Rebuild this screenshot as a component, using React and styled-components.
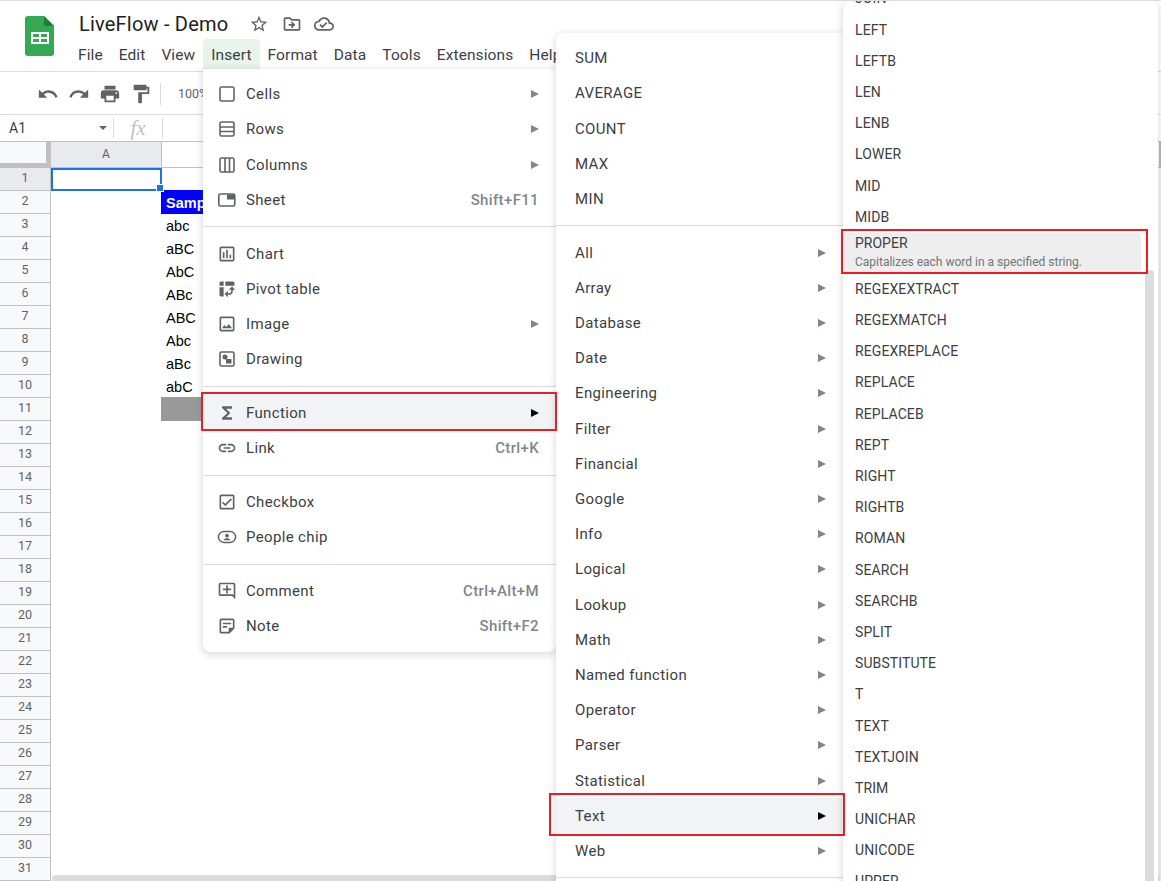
import styled, { createGlobalStyle } from "styled-components";
import {
  MdUndo,
  MdRedo,
  MdPrint,
  MdFormatPaint,
  MdStarBorder,
  MdOutlineDriveFileMove,
  MdOutlineCloudDone,
  MdOutlineAssessment,
  MdPivotTableChart,
  MdOutlineImage,
  MdFunctions,
  MdLink,
  MdOutlineCheckBox,
  MdOutlineAddComment,
  MdOutlineStickyNote2,
} from "react-icons/md";

const GlobalStyle = createGlobalStyle`
  html, body {
    margin: 0;
    padding: 0;
    background: #fff;
  }
  body {
    font-family: Roboto, "Liberation Sans", sans-serif;
    color: #3c4043;
  }
`;

const Page = styled.div`
  position: relative;
  width: 1161px;
  height: 881px;
  overflow: hidden;
  border-top: 1px solid #dadce0;
  box-sizing: border-box;
`;

const Header = styled.header`
  display: flex;
  height: 71px;
  box-sizing: border-box;
  padding-left: 25px;
  border-bottom: 1px solid #dadce0;
`;

const LogoSlot = styled.div`
  width: 45px;
  padding-top: 15px;
`;

const TitleBlock = styled.div`
  display: flex;
  flex-direction: column;
`;

const TitleRow = styled.div`
  display: flex;
  align-items: center;
  height: 38px;
  box-sizing: border-box;
  padding: 8px 0 0 9px;
`;

const Title = styled.div`
  width: 170px;
  font-size: 20px;
  letter-spacing: 0.2px;
  color: #202124;
`;

const TitleIcon = styled.span`
  display: flex;
  width: 32.5px;
  font-size: 20px;
  color: #5f6368;
`;

const MenuBar = styled.nav`
  display: flex;
`;

const MenuBarItem = styled.div`
  height: 30px;
  padding: 0 8px;
  font-size: 15.5px;
  letter-spacing: 0.1px;
  line-height: 32px;
  border-radius: 4px 4px 0 0;
  white-space: nowrap;
  background: ${(p) => (p.$open ? "#e6f4ea" : "transparent")};
`;

const Toolbar = styled.div`
  display: flex;
  align-items: center;
  height: 43px;
  box-sizing: border-box;
  padding: 1px 0 0 32px;
  border-bottom: 1px solid #dadce0;
`;

const ToolIcon = styled.span`
  display: flex;
  justify-content: center;
  width: 31px;
  font-size: 22px;
  color: #5f6368;
`;

const ToolDivider = styled.span`
  width: 1px;
  height: 22px;
  margin: 0 17px 0 4px;
  background: #dadce0;
`;

const ZoomValue = styled.span`
  font-size: 12.5px;
  color: #5f6368;
`;

const FormulaBar = styled.div`
  display: flex;
  align-items: center;
  height: 27px;
  box-sizing: border-box;
  border-bottom: 1px solid #c0c0c0;
`;

const NameBox = styled.div`
  display: flex;
  align-items: center;
  justify-content: space-between;
  width: 113px;
  box-sizing: border-box;
  padding: 0 6px 0 9px;
  font-size: 14px;
  color: #3c4043;
`;

const Caret = styled.span`
  width: 0;
  height: 0;
  border-left: 4px solid transparent;
  border-right: 4px solid transparent;
  border-top: 4px solid #5f6368;
`;

const FormulaDivider = styled.span`
  width: 1px;
  height: 20px;
  background: #dadce0;
`;

const Fx = styled.span`
  width: 48px;
  text-align: center;
  font-family: "Liberation Serif", serif;
  font-style: italic;
  font-size: 21px;
  line-height: 22px;
  color: #bdc1c6;
`;

const HeaderRow = styled.div`
  display: flex;
  height: 26px;
  box-sizing: border-box;
  border-bottom: 1px solid #c0c0c0;
`;

const Corner = styled.div`
  width: 46px;
  height: 21px;
  background: #f8f9fa;
`;

const CornerWrap = styled.div`
  width: 51px;
  height: 25px;
  background: #c0c0c0;
`;

const ColumnHead = styled.div`
  width: 111px;
  box-sizing: border-box;
  border-right: 1px solid #c0c0c0;
  background: #e8eaed;
  text-align: center;
  font-size: 12px;
  line-height: 25px;
  color: #5f6368;
`;

const Row = styled.div`
  display: flex;
  height: 23px;
`;

const RowNumber = styled.div`
  width: 51px;
  box-sizing: border-box;
  border-right: 1px solid #c0c0c0;
  border-bottom: 1px solid #c0c0c0;
  background: ${(p) => (p.$active ? "#e8eaed" : "#f8f9fa")};
  text-align: center;
  font-size: 12.5px;
  line-height: 20px;
  color: #5f6368;
`;

const Cell = styled.div`
  position: relative;
  box-sizing: border-box;
  width: ${(p) => (p.$selected ? "111px" : "110px")};
  margin-right: ${(p) => (p.$selected ? "-1px" : "0")};
  border: ${(p) => (p.$selected ? "2px solid #1a73e8" : "none")};
  height: ${(p) => (p.$selected ? "23px" : "auto")};
`;

const FillHandle = styled.span`
  position: absolute;
  right: -4px;
  bottom: -3px;
  width: 6px;
  height: 6px;
  background: #1a73e8;
  border: 1px solid #fff;
  z-index: 1;
`;

const SampleCell = styled.div`
  width: 110px;
  height: ${(p) => (p.$kind === "body" ? "23px" : "24px")};
  margin-top: ${(p) => (p.$kind === "body" ? "0" : "-1px")};
  box-sizing: border-box;
  padding-left: 5px;
  font-family: "Liberation Sans", Arial, sans-serif;
  font-size: 14.5px;
  line-height: ${(p) => (p.$kind === "head" ? "26px" : "24px")};
  color: ${(p) => (p.$kind === "head" ? "#fff" : "#000")};
  font-weight: ${(p) => (p.$kind === "head" ? 700 : 400)};
  background: ${(p) =>
    p.$kind === "head" ? "#0000ff" : p.$kind === "foot" ? "#999" : "transparent"};
`;

const HorizontalScroll = styled.div`
  position: absolute;
  left: 52px;
  right: 0;
  bottom: 0;
  height: 6px;
  border-radius: 4px 0 0 0;
  background: #dadce0;
`;

const VerticalTrack = styled.div`
  position: absolute;
  right: 0;
  top: 140px;
  bottom: 0;
  width: 2px;
  background: #eee;
`;

const VerticalThumb = styled.div`
  height: 27px;
  background: #b8b8b8;
`;

const Menu = styled.div`
  position: absolute;
  top: ${(p) => p.$top}px;
  left: ${(p) => p.$left}px;
  width: ${(p) => p.$width}px;
  height: ${(p) => p.$height}px;
  box-sizing: border-box;
  padding-top: ${(p) => p.$pad}px;
  background: #fff;
  overflow: hidden;
  border-radius: ${(p) => p.$radius};
  box-shadow: 0 2px 6px 2px rgba(60, 64, 67, 0.15);
`;

const MenuRow = styled.div`
  display: flex;
  align-items: center;
  height: 35.2px;
  padding: 0 17px 0 ${(p) => p.$indent}px;
  font-size: 15px;
  letter-spacing: 0.35px;
  color: #3c4043;
  background: ${(p) => (p.$active ? "#f1f3f4" : "transparent")};
`;

const MenuIcon = styled.span`
  display: flex;
  justify-content: center;
  width: 20px;
  margin-right: 9px;
  font-size: 20px;
  color: #5f6368;
`;

const MenuLabel = styled.span`
  flex: 1;
`;

const Shortcut = styled.span`
  font-weight: 500;
  color: #80868b;
`;

const Arrow = styled.span`
  width: 0;
  height: 0;
  border-top: 4px solid transparent;
  border-bottom: 4px solid transparent;
  border-left: 8px solid ${(p) => (p.$active ? "#000" : "#80868b")};
`;

const Separator = styled.div`
  height: 1px;
  margin: 8.8px 0;
  background: #dadce0;
`;

const FunctionList = styled.div`
  margin-top: -17.6px;
  width: 298px;
`;

const FunctionRow = styled.div`
  height: 31.2px;
  padding-left: 12px;
  font-size: 14px;
  letter-spacing: 0.1px;
  line-height: 31px;
  color: #3c4043;
`;

const ProperRow = styled.div`
  height: 41px;
  box-sizing: border-box;
  padding: 1px 0 0 12px;
  background: #eee;
`;

const ProperName = styled.div`
  font-size: 14px;
  line-height: 19px;
`;

const ProperHint = styled.div`
  font-size: 12px;
  line-height: 19px;
  color: #70757a;
`;

const MenuScroll = styled.div`
  position: absolute;
  top: 269px;
  right: 4px;
  bottom: 0;
  width: 9px;
  border-radius: 3px 3px 0 0;
  background: #dadce0;
`;

const Callout = styled.div`
  position: absolute;
  top: ${(p) => p.$top}px;
  left: ${(p) => p.$left}px;
  width: ${(p) => p.$width}px;
  height: ${(p) => p.$height}px;
  box-sizing: border-box;
  border: 2px solid #ed1c24;
`;

const SheetsLogo = () => (
  <svg width="29" height="40" viewBox="0 0 29 40">
    <path
      d="M3 0H19L29 10V37a3 3 0 0 1-3 3H3a3 3 0 0 1-3-3V3a3 3 0 0 1 3-3z"
      fill="#34a853"
    />
    <path d="M19 0L29 10H21a2 2 0 0 1-2-2z" fill="#188038" />
    <path
      d="M6 16H24V28H6zM8 18V21H14V18zM16 18V21H22V18zM8 23V26H14V23zM16 23V26H22V23z"
      fill="#fff"
      fillRule="evenodd"
    />
  </svg>
);

const Glyph = ({ children }) => (
  <svg width="20" height="20" viewBox="0 0 20 20" fill="none" stroke="currentColor" strokeWidth="1.6">
    {children}
  </svg>
);

const CellsIcon = () => (
  <Glyph>
    <rect x="3" y="3" width="14" height="14" rx="1.5" />
  </Glyph>
);

const RowsIcon = () => (
  <Glyph>
    <rect x="3" y="3" width="14" height="14" rx="1.5" />
    <path d="M3 8h14M3 12.500h14" />
  </Glyph>
);

const ColumnsIcon = () => (
  <Glyph>
    <rect x="3" y="3" width="14" height="14" rx="1.5" />
    <path d="M8 3v14M12.500 3v14" />
  </Glyph>
);

const SheetIcon = () => (
  <Glyph>
    <rect x="1.800" y="4" width="16" height="12" rx="1.500" />
    <path d="M10 4.500h7.300v5H10z" fill="currentColor" stroke="none" />
  </Glyph>
);

const DrawingIcon = () => (
  <Glyph>
    <rect x="3" y="3" width="14" height="14" rx="1.500" />
    <circle cx="8" cy="8" r="2.500" fill="currentColor" stroke="none" />
    <rect x="9" y="10" width="5.500" height="4.500" fill="currentColor" stroke="none" />
  </Glyph>
);

const PeopleIcon = () => (
  <svg width="22" height="20" viewBox="0 0 22 20" fill="none" stroke="currentColor" strokeWidth="1.6">
    <rect x="1.500" y="4" width="19" height="12" rx="6" />
    <circle cx="11" cy="8.500" r="2" fill="currentColor" stroke="none" />
    <path d="M7.500 13.500c0-1.500 2-2 3.500-2s3.500.5 3.500 2z" fill="currentColor" stroke="none" />
  </svg>
);

const insertMenu = [
  [
    { icon: <CellsIcon />, label: "Cells", sub: true },
    { icon: <RowsIcon />, label: "Rows", sub: true },
    { icon: <ColumnsIcon />, label: "Columns", sub: true },
    { icon: <SheetIcon />, label: "Sheet", keys: "Shift+F11" },
  ],
  [
    { icon: <MdOutlineAssessment />, label: "Chart" },
    { icon: <MdPivotTableChart />, label: "Pivot table" },
    { icon: <MdOutlineImage />, label: "Image", sub: true },
    { icon: <DrawingIcon />, label: "Drawing" },
  ],
  [
    { icon: <MdFunctions />, label: "Function", sub: true, active: true },
    { icon: <MdLink />, label: "Link", keys: "Ctrl+K" },
  ],
  [
    { icon: <MdOutlineCheckBox />, label: "Checkbox" },
    { icon: <PeopleIcon />, label: "People chip" },
  ],
  [
    { icon: <MdOutlineAddComment />, label: "Comment", keys: "Ctrl+Alt+M" },
    { icon: <MdOutlineStickyNote2 />, label: "Note", keys: "Shift+F2" },
  ],
];

const quickFunctions = ["SUM", "AVERAGE", "COUNT", "MAX", "MIN"];

const categories = [
  "All",
  "Array",
  "Database",
  "Date",
  "Engineering",
  "Filter",
  "Financial",
  "Google",
  "Info",
  "Logical",
  "Lookup",
  "Math",
  "Named function",
  "Operator",
  "Parser",
  "Statistical",
  "Text",
  "Web",
];

const textBefore = ["JOIN", "LEFT", "LEFTB", "LEN", "LENB", "LOWER", "MID", "MIDB"];

const textAfter = [
  "REGEXEXTRACT",
  "REGEXMATCH",
  "REGEXREPLACE",
  "REPLACE",
  "REPLACEB",
  "REPT",
  "RIGHT",
  "RIGHTB",
  "ROMAN",
  "SEARCH",
  "SEARCHB",
  "SPLIT",
  "SUBSTITUTE",
  "T",
  "TEXT",
  "TEXTJOIN",
  "TRIM",
  "UNICHAR",
  "UNICODE",
  "UPPER",
];

const menuNames = ["File", "Edit", "View", "Insert", "Format", "Data", "Tools", "Extensions", "Help"];

const samples = ["abc", "aBC", "AbC", "ABc", "ABC", "Abc", "aBc", "abC"];

const sampleFor = (n) => {
  if (n === 2) return { kind: "head", text: "Sample" };
  if (n >= 3 && n <= 10) return { kind: "body", text: samples[n - 3] };
  if (n === 11) return { kind: "foot", text: "" };
  return null;
};

const App = () => {
  const rows = Array.from({ length: 31 }, (_, i) => i + 1);

  return (
    <Page>
      <GlobalStyle />
      <Header>
        <LogoSlot>
          <SheetsLogo />
        </LogoSlot>
        <TitleBlock>
          <TitleRow>
            <Title>LiveFlow - Demo</Title>
            <TitleIcon>
              <MdStarBorder />
            </TitleIcon>
            <TitleIcon>
              <MdOutlineDriveFileMove />
            </TitleIcon>
            <TitleIcon>
              <MdOutlineCloudDone />
            </TitleIcon>
          </TitleRow>
          <MenuBar>
            {menuNames.map((name) => (
              <MenuBarItem key={name} $open={name === "Insert"}>
                {name}
              </MenuBarItem>
            ))}
          </MenuBar>
        </TitleBlock>
      </Header>

      <Toolbar>
        <ToolIcon>
          <MdUndo />
        </ToolIcon>
        <ToolIcon>
          <MdRedo />
        </ToolIcon>
        <ToolIcon>
          <MdPrint />
        </ToolIcon>
        <ToolIcon>
          <MdFormatPaint />
        </ToolIcon>
        <ToolDivider />
        <ZoomValue>100%</ZoomValue>
      </Toolbar>

      <FormulaBar>
        <NameBox>
          A1
          <Caret />
        </NameBox>
        <FormulaDivider />
        <Fx>fx</Fx>
        <FormulaDivider />
      </FormulaBar>

      <HeaderRow>
        <CornerWrap>
          <Corner />
        </CornerWrap>
        <ColumnHead>A</ColumnHead>
      </HeaderRow>

      {rows.map((n) => {
        const sample = sampleFor(n);
        return (
          <Row key={n}>
            <RowNumber $active={n === 1}>{n}</RowNumber>
            <Cell $selected={n === 1}>{n === 1 && <FillHandle />}</Cell>
            {sample && <SampleCell $kind={sample.kind}>{sample.text}</SampleCell>}
          </Row>
        );
      })}

      <HorizontalScroll />
      <VerticalTrack>
        <VerticalThumb />
      </VerticalTrack>

      <Menu $top={68} $left={203} $width={353} $height={583} $pad={7.7} $radius="0 0 8px 8px">
        {insertMenu.map((group, i) => (
          <div key={i}>
            {i > 0 && <Separator />}
            {group.map((item) => (
              <MenuRow key={item.label} $indent={14} $active={item.active}>
                <MenuIcon>{item.icon}</MenuIcon>
                <MenuLabel>{item.label}</MenuLabel>
                {item.keys && <Shortcut>{item.keys}</Shortcut>}
                {item.sub && <Arrow $active={item.active} />}
              </MenuRow>
            ))}
          </div>
        ))}
      </Menu>

      <Menu $top={32} $left={556} $width={287} $height={860} $pad={7.6} $radius="8px 0 0 8px">
        {quickFunctions.map((name) => (
          <MenuRow key={name} $indent={19}>
            <MenuLabel>{name}</MenuLabel>
          </MenuRow>
        ))}
        <Separator />
        {categories.map((name) => (
          <MenuRow key={name} $indent={19} $active={name === "Text"}>
            <MenuLabel>{name}</MenuLabel>
            <Arrow $active={name === "Text"} />
          </MenuRow>
        ))}
        <Separator />
      </Menu>

      <Menu $top={0} $left={843} $width={315} $height={890} $pad={0} $radius="8px 8px 0 0">
        <FunctionList>
          {textBefore.map((name) => (
            <FunctionRow key={name}>{name}</FunctionRow>
          ))}
          <ProperRow>
            <ProperName>PROPER</ProperName>
            <ProperHint>Capitalizes each word in a specified string.</ProperHint>
          </ProperRow>
          {textAfter.map((name) => (
            <FunctionRow key={name}>{name}</FunctionRow>
          ))}
        </FunctionList>
        <MenuScroll />
      </Menu>

      <Callout $top={391} $left={201} $width={356} $height={39} />
      <Callout $top={792} $left={549} $width={296} $height={43} />
      <Callout $top={228} $left={841} $width={307} $height={45} />
    </Page>
  );
};

export default App;
